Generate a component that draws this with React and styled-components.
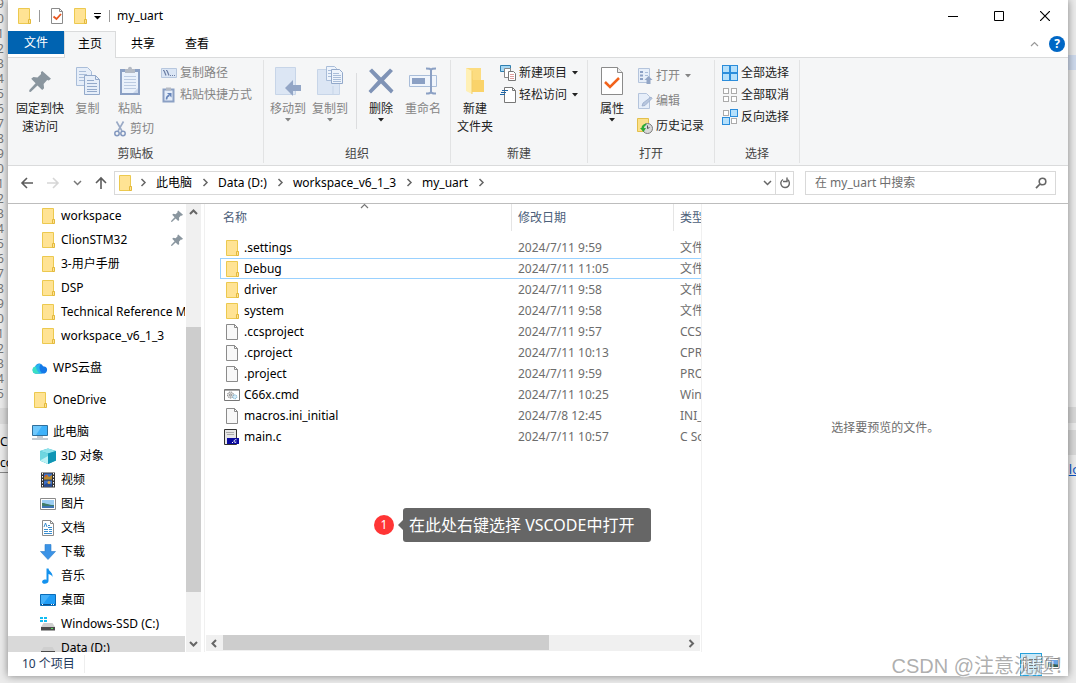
import React from 'react';
import styled, { createGlobalStyle } from 'styled-components';

const GlobalStyle = createGlobalStyle`
  * {
    box-sizing: border-box;
  }
  body {
    margin: 0;
    font: 12px/18px 'Noto Sans', 'Noto Sans CJK SC', sans-serif;
    color: #000;
  }
  button {
    font: inherit;
    color: inherit;
    background: none;
    border: 0;
    padding: 0;
    margin: 0;
  }
  svg {
    display: block;
    flex: none;
  }
`;

/* ---------- icons ---------- */

const FolderIcon = () => (
  <svg width="16" height="16" viewBox="0 0 16 16">
    <path d="M2.500.5h11v10.500h.5v4.500H2.500z" fill="#ffe394" stroke="#ecc94f" />
    <path d="M12.500 11.500h2v4h-2z" fill="#ffe394" stroke="#e3b93c" />
  </svg>
);

const FileIcon = () => (
  <svg width="16" height="16" viewBox="0 0 16 16">
    <path d="M2.500.5h8l3 3v12h-11z" fill="#f8f8f8" stroke="#8b8b8b" />
    <path d="M10.500.5v3h3z" fill="#fff" stroke="#8b8b8b" />
  </svg>
);

const CmdIcon = () => (
  <svg width="16" height="16" viewBox="0 0 16 16">
    <path d="M.5 2.500h15v11H.5z" fill="#fff" stroke="#777" />
    <path d="M1 3h14v1H1z" fill="#aaa" />
    <circle cx="6.500" cy="8" r="3" fill="#ddd" stroke="#777" strokeDasharray="1.200 .8" />
    <circle cx="6.500" cy="8" r="1" fill="#fff" stroke="#888" />
    <circle cx="10.800" cy="9.800" r="2" fill="#d7ecf7" stroke="#66a9cc" strokeDasharray="1 .6" />
  </svg>
);

const CSourceIcon = () => (
  <svg width="16" height="16" viewBox="0 0 16 16">
    <path d="M.5.5h12v15H.5z" fill="#e6e6e6" stroke="#333" />
    <path d="M2 3.500h8M3 5.500h7" stroke="#aaa" />
    <path d="M3 9h12v6H3z" fill="#0a0aa0" />
    <path d="M12.500 10.800c-2-.8-3.500 2-1.500 2.600l1.300-.4M8 13.500h1" fill="none" stroke="#fff" />
  </svg>
);

const PinIcon = ({ size = 12 }) => (
  <svg width={size} height={size} viewBox="0 0 20 20">
    <path
      d="M12 1l8 7-2 1.500-1.500-.3-3.200 3.600.4 3.700-1.700 1.700-4.300-4L1.500 20 0 19.500.5 18l5.500-6-4-4 2-1.700 3.700.6L11 3.700 10.800 2z"
      fill="#8a969f"
    />
  </svg>
);

const CloudIcon = () => (
  <svg width="16" height="16" viewBox="0 0 16 16">
    <path d="M4 13.500a3.500 3.500 0 0 1-.8-6.800C3.800 3.500 9 1.500 11 6.200c3.500 0 5 2.800 3.700 5.300-.8 1.500-1.700 2-3.200 2z" fill="#1479e8" />
    <path d="M4 13.500a3.500 3.500 0 0 1-.8-6.800C4 4.500 6.800 3.300 9 4.200 6 6 8 12 10.500 13.500z" fill="#28b4ee" />
    <path d="M4 13.500a3.500 3.500 0 0 1 0-7c0 3 2 6 4.500 7z" fill="#3be0c4" />
  </svg>
);

const PcIcon = () => (
  <svg width="16" height="16" viewBox="0 0 16 16">
    <path d="M.5 1.500h15v10H.5z" fill="#3fb2fa" stroke="#2f6f9c" />
    <path d="M1 2h9l-6 9H1z" fill="#6fc8fc" />
    <path d="M5 13h6M0 15h16" stroke="#8797a5" />
  </svg>
);

const CubeIcon = () => (
  <svg width="16" height="16" viewBox="0 0 16 16">
    <path d="M0 3l8-2.500L16 3v9.500L8 16l-8-3.500z" fill="#35b6c9" />
    <path d="M0 3l8-2.500L16 3 8 5.500z" fill="#8fe3ec" />
    <path d="M0 3l8 2.500V16l-8-3.500z" fill="#6fd6e0" />
    <path d="M0 12.500L8 8v8z" fill="#bdf2f5" />
    <path d="M8 5.500L16 3v9.500L8 16z" fill="#0f95b4" />
  </svg>
);

const VideoIcon = () => (
  <svg width="16" height="16" viewBox="0 0 16 16">
    <path d="M1 .5h14v15H1z" fill="#333" />
    <path d="M2.500 1v14M13.500 1v14" stroke="#fff" strokeDasharray="1.500 1.500" />
    <path d="M4 1.500h8v6H4zM4 8.500h8v6H4z" fill="#3d6fc4" />
    <path d="M4 5l3-2.500 2 2.500 3-2v4.500H4z" fill="#b98a2e" />
    <path d="M4 13l3-2 5 1.500v2H4z" fill="#284a8e" />
    <circle cx="9" cy="10.500" r="1.500" fill="#e4a63a" />
    <circle cx="6" cy="4" r="1" fill="#d6562f" />
  </svg>
);

const PictureIcon = () => (
  <svg width="16" height="16" viewBox="0 0 16 16">
    <path d="M.5 2.500h15v11H.5z" fill="#fff" stroke="#8a8a8a" />
    <path d="M2 4h12v8H2z" fill="#9ccdf2" />
    <path d="M2 7c4 0 6 2 12 2v1H2z" fill="#3f7c6a" />
    <path d="M2 10h12v2H2z" fill="#3c74b4" />
  </svg>
);

const DocIcon = () => (
  <svg width="16" height="16" viewBox="0 0 16 16">
    <path d="M2.500.5h8l3 3v12h-11z" fill="#fff" stroke="#8b8b8b" />
    <path d="M10.500.5v3h3" fill="none" stroke="#8b8b8b" />
    <path d="M4 7l1.500-4L7 7M8 5.500h2M8 7.500h4M4 9.500h4M9 9.500h3M4 11.500h4M9 11.500h3M4 13.500h8" fill="none" stroke="#3a8ecf" />
  </svg>
);

const DownloadIcon = () => (
  <svg width="16" height="16" viewBox="0 0 16 16">
    <path d="M5 .5h6v7h4.500L8 15.500.5 7.500H5z" fill="#3b93e6" stroke="#2a7ccb" strokeWidth=".6" />
  </svg>
);

const MusicIcon = () => (
  <svg width="16" height="16" viewBox="0 0 16 16">
    <path d="M6.500.5h2c.3 3 4.500 3.500 4 8.500-.8-2-2-2.500-4-3v7c0 2-2.500 3-4.500 2.700-2.500-.4-2.500-3.300 0-4 1-.3 1.700-.2 2.500.1z" fill="#1492ee" />
  </svg>
);

const DesktopIcon = () => (
  <svg width="16" height="16" viewBox="0 0 16 16">
    <path d="M.5 2.500h15v11H.5z" fill="#1f9cf5" stroke="#0a6cb8" />
    <path d="M1 3h9L3 12H1z" fill="#45b1fa" />
    <path d="M1 12.500h14" stroke="#0b4f8c" />
    <path d="M2 12.500h1M11 12.500h1M13 12.500h1" stroke="#fff" />
  </svg>
);

const DriveIcon = ({ system }) => (
  <svg width="16" height="16" viewBox="0 0 16 16">
    {system && <path d="M0 1h3v2H0zM4 1h3v2H4zM0 4h3v2H0zM4 4h3v2H4z" fill="#12bdf2" />}
    <path d="M3.500 7h9l2.500 4H1z" fill="#cfcfcf" />
    <path d="M1 11h14v3.500H1z" fill="#4b4b4b" />
    <path d="M11 12.500h2" stroke="#5be05b" />
  </svg>
);

const CheckDocIcon = () => (
  <svg width="16" height="16" viewBox="0 0 16 16">
    <path d="M2.500.5h8l3 3v12h-11z" fill="#fff" stroke="#8b8b8b" />
    <path d="M10.500.5v3h3" fill="none" stroke="#8b8b8b" />
    <path d="M4.500 8.500l3 2.500 4.500-5" fill="none" stroke="#e8561f" strokeWidth="1.800" />
  </svg>
);

const MenuArrow = () => (
  <svg width="7" height="9" viewBox="0 0 7 9">
    <path d="M0 2.500h7" stroke="#000" />
    <path d="M0 5h7L3.500 8.500z" fill="#000" />
  </svg>
);

const Caret = () => (
  <svg width="6" height="4" viewBox="0 0 6 4">
    <path d="M0 0h6L3 3.500z" fill="currentColor" />
  </svg>
);

const chevrons = {
  right: 'M2.500 1l3.500 3.500L2.500 8',
  left: 'M6 1L2.500 4.500 6 8',
  down: 'M1 3l3.500 3.500L8 3',
  up: 'M1 6l3.500-3.500L8 6',
};

const Chevron = ({ dir, color = '#666', weight = 1.5 }) => (
  <svg width="9" height="9" viewBox="0 0 9 9">
    <path d={chevrons[dir]} fill="none" stroke={color} strokeWidth={weight} />
  </svg>
);

const arrows = {
  back: 'M13 7H2M7 2L2 7l5 5',
  forward: 'M1 7h11M7 2l5 5-5 5',
  up: 'M7 13V2M2 7l5-5 5 5',
};

const Arrow = ({ dir, color }) => (
  <svg width="14" height="14" viewBox="0 0 14 14">
    <path d={arrows[dir]} fill="none" stroke={color} strokeWidth="1.600" />
  </svg>
);

const CopyIcon = () => (
  <svg width="26" height="30" viewBox="0 0 26 30">
    <path d="M1.500 1.500h11l4 4v14h-15z" fill="#e6eef9" stroke="#a9bdd9" />
    <path d="M4 5.500h7M4 8.500h8M4 11.500h8M4 14.500h5" stroke="#a9bdd9" />
    <path d="M9.500 9.500h11l4 4v15h-15z" fill="#e6eef9" stroke="#93a9ca" />
    <path d="M20.500 9.500v4h4M12 14.500h7M12 17.500h10M12 20.500h10M12 23.500h10M12 25.500h10" fill="none" stroke="#93a9ca" />
  </svg>
);

const PasteIcon = () => (
  <svg width="20" height="30" viewBox="0 0 20 30">
    <path d="M0 3h20v26H0z" fill="#8ba0c4" />
    <path d="M2 6h16v21H2z" fill="#eaf1fb" />
    <path d="M4 10.500h12M4 13.500h12M4 16.500h12M4 19.500h12M4 22.500h12" stroke="#bccbe2" />
    <path d="M5 3h3c0-3 4-3 4 0h3v4H5z" fill="#b4bac4" />
    <path d="M13 27h5v-5z" fill="#cbd8ec" />
  </svg>
);

const CutIcon = () => (
  <svg width="12" height="16" viewBox="0 0 12 16">
    <path d="M2.500.5L8 10M9.500.5L4 10" fill="none" stroke="#9aaac6" strokeWidth="1.600" />
    <circle cx="3" cy="12.500" r="2.200" fill="none" stroke="#8398bf" strokeWidth="1.500" />
    <circle cx="9" cy="12.500" r="2.200" fill="none" stroke="#8398bf" strokeWidth="1.500" />
  </svg>
);

const PathIcon = () => (
  <svg width="16" height="16" viewBox="0 0 16 16">
    <path d="M.5 3.500h15v9H.5z" fill="#dbe6f5" stroke="#b7c7de" />
    <path d="M3 5.500l2 5M6 5.500l2 5" stroke="#6d7fa5" strokeWidth="1.200" />
    <path d="M2 5.500h1M5 5.500h1M9 10.500h1M11 10.500h1M13 10.500h1" stroke="#6d7fa5" />
  </svg>
);

const PasteLinkIcon = () => (
  <svg width="16" height="16" viewBox="0 0 16 16">
    <path d="M2.500 2.500h10v12h-10z" fill="#e4edf9" stroke="#8ba0c4" strokeWidth="2" />
    <path d="M5 .5h5v3H5z" fill="#b4bac4" />
    <path d="M5.500 12.500c0-2 .6-3.500 2.800-4" fill="none" stroke="#6583b9" strokeWidth="1.600" />
    <path d="M6 6h4.500v4.500z" fill="#6583b9" />
  </svg>
);

const MoveToIcon = () => (
  <svg width="28" height="30" viewBox="0 0 28 30">
    <path d="M1.500 1.500h20v27h-20z" fill="#dce6f4" stroke="#c7d5e8" />
    <path d="M17 20l0 8" stroke="#c7d5e8" />
    <path d="M11 22l8-8v5h8v6h-8v5z" fill="#93a6c6" />
  </svg>
);

const CopyToIcon = () => (
  <svg width="28" height="30" viewBox="0 0 28 30">
    <path d="M1.500 3.500h22v25h-22z" fill="#dce6f4" stroke="#c7d5e8" />
    <path d="M17 20v8" stroke="#c7d5e8" />
    <path d="M10.500.5h8l2 2v12h-10z" fill="#eef4fc" stroke="#a9bdd9" />
    <path d="M15.500 3.500h8l3 3v11h-11z" fill="#eef4fc" stroke="#93a9ca" />
    <path d="M12 4.500h3M12 7.500h3M12 10.500h3M17 7.500h6M17 9.500h8M17 11.500h8M17 13.500h8M17 15.500h8" stroke="#a9bdd9" />
  </svg>
);

const DeleteIcon = () => (
  <svg width="26" height="26" viewBox="0 0 26 26">
    <path d="M1 3l3-2.500 9 9 9-9L25 3l-9 9.500 9.500 10L23 25.500l-10-10-10 10L.5 23 10 12.500z" fill="#7f93b6" />
  </svg>
);

const RenameIcon = () => (
  <svg width="28" height="28" viewBox="0 0 28 28">
    <path d="M.5 8.500h27v11H.5z" fill="#f0f5fc" stroke="#a9bdd9" />
    <path d="M3 11h13v6H3z" fill="#8ba0c4" />
    <path d="M17 1.500c3 0 5 0 5 2v21c0 2-2 2-5 2M27 1.500c-3 0-5 0-5 2v21c0 2 2 2 5 2" fill="none" stroke="#8ba0c4" strokeWidth="2" />
  </svg>
);

const NewFolderIcon = () => (
  <svg width="20" height="28" viewBox="0 0 20 28">
    <path d="M1 1h15v12h3v12H7z" fill="#fad36a" />
    <path d="M1 1h15v12H8z" fill="#fcdc80" />
    <path d="M1 1l6 3v23l-6-3z" fill="#fff0b5" />
    <path d="M7 4v23" stroke="#f3cf68" />
  </svg>
);

const NewItemIcon = () => (
  <svg width="16" height="16" viewBox="0 0 16 16">
    <path d="M.5.5h10v6H.5z" fill="#a6d8f4" stroke="#2f7fb0" />
    <path d="M4.500 3.500h6v9h-6z" fill="#fff" stroke="#888" />
    <path d="M8.500 6.500h5l2 2v7h-7z" fill="#fff" stroke="#777" />
    <path d="M10 9.500h4M10 11.500h4M10 13.500h4" stroke="#df9d9d" />
  </svg>
);

const EasyAccessIcon = () => (
  <svg width="16" height="16" viewBox="0 0 16 16">
    <path d="M4.500.5h8l3 3v12h-11z" fill="#fff" stroke="#777" />
    <path d="M12.500.5v3h3" fill="none" stroke="#777" />
    <path d="M2 3.500h6M1 5.500h5M0 7.500h5" stroke="#1f67a8" />
  </svg>
);

const PropertiesIcon = () => (
  <svg width="22" height="30" viewBox="0 0 22 30">
    <path d="M.5 1.500h16l5 5v22H.5z" fill="#fff" stroke="#8b8b8b" />
    <path d="M16.500 1.500v5h5" fill="#eee" stroke="#8b8b8b" />
    <path d="M4 16l5 5 9-9" fill="none" stroke="#f2631c" strokeWidth="2.500" />
  </svg>
);

const OpenIcon = () => (
  <svg width="16" height="16" viewBox="0 0 16 16">
    <path d="M1.500.5h11v14h-11z" fill="#e6eef9" stroke="#b4c4dc" />
    <path d="M3 3h3v2H3zM3 6.500h3v2H3zM3 10h3v2H3z" fill="#8ba0c4" />
    <path d="M8 4.500h3M8 7.500h3" stroke="#a9bdd9" />
    <path d="M11.500 8l4 4h-2v4h-4v-4h-2z" fill="#93a6c6" />
  </svg>
);

const EditIcon = () => (
  <svg width="16" height="16" viewBox="0 0 16 16">
    <path d="M1.500.5h8l3 3v12h-11z" fill="#e6eef9" stroke="#b4c4dc" />
    <path d="M5 13l1-3 8-6 1 1.500-7 7z" fill="#b7c6de" stroke="#93a6c6" strokeWidth=".7" />
  </svg>
);

const HistoryIcon = () => (
  <svg width="16" height="16" viewBox="0 0 16 16">
    <path d="M.5.5h11v13H.5z" fill="#fbe08a" stroke="#e3bf4b" />
    <circle cx="10.500" cy="10.500" r="5" fill="#d9d9d9" stroke="#7c7c7c" />
    <path d="M10.500 7.500v3l2-1" fill="none" stroke="#555" />
    <path d="M9 5.500c-3 .5-4.500 2.500-4.500 4.500H3l3.500 4L9 10H7c0-1.500 1-2.500 2.500-3z" fill="#2eab37" />
  </svg>
);

const selectTiles = [
  [0, 0],
  [8, 0],
  [0, 8],
  [8, 8],
];

const SelectIcon = ({ on }) => (
  <svg width="16" height="16" viewBox="0 0 16 16">
    {selectTiles.map(([x, y], i) => {
      const filled = on.includes(i);
      return (
        <rect
          key={i}
          x={filled ? x + 0.5 : x + 1.5}
          y={filled ? y + 0.5 : y + 1.5}
          width={filled ? 7 : 5}
          height={filled ? 7 : 5}
          fill={filled ? '#b5e0fb' : '#fff'}
          stroke={filled ? '#2b8ddb' : '#ababab'}
        />
      );
    })}
  </svg>
);

const SearchIcon = () => (
  <svg width="12" height="12" viewBox="0 0 12 12">
    <circle cx="7.500" cy="4.500" r="3.300" fill="none" stroke="#666" strokeWidth="1.600" />
    <path d="M5 7L1 11.200" stroke="#666" strokeWidth="1.800" />
  </svg>
);

const RefreshIcon = () => (
  <svg width="12" height="12" viewBox="0 0 12 12">
    <path d="M8.500 2.700A4.300 4.300 0 1 1 4 2.500" fill="none" stroke="#666" strokeWidth="1.400" />
    <path d="M8 .5v4h-4" fill="none" stroke="#666" strokeWidth="1.400" />
  </svg>
);

const DetailsIcon = () => (
  <svg width="16" height="14" viewBox="0 0 16 14">
    <path d="M.5.5h4v13h-4z" fill="#fff" stroke="#888" />
    <path d="M2 3.500h1M2 6.500h1" stroke="#888" />
    <path d="M2 10.500h1" stroke="#d33" />
    <path d="M6 2.500h4M11 2.500h4M6 5.500h4M11 5.500h4M6 8.500h4M11 8.500h4M6 11.500h4M11 11.500h4" stroke="#777" />
  </svg>
);

const ThumbnailIcon = () => (
  <svg width="14" height="12" viewBox="0 0 14 12">
    <path d="M.5.5h13v10H.5z" fill="#fff" stroke="#888" />
    <path d="M2 2h10v7H2z" fill="#6aa5e8" />
    <path d="M2 5c3 0 5 1.500 10 1.500V9H2z" fill="#2d5f5c" />
  </svg>
);

/* ---------- desktop behind the window ---------- */

const Desktop = styled.div`
  position: relative;
  display: flex;
  height: 100vh;
  padding: 0 8px 7px;
  overflow: hidden;
  background: #ebebeb;
`;

const LineNumbers = styled.ol`
  position: absolute;
  top: -4px;
  left: -3px;
  margin: 0;
  padding: 0;
  list-style: none;
  color: #777;
  font: 12px/15px 'Noto Sans', sans-serif;
`;

const BackPanel = styled.div`
  position: absolute;
  top: ${(props) => props.$top}px;
  ${(props) => props.$side}: 0;
  width: 8px;
  height: ${(props) => props.$height}px;
  background: ${(props) => props.$color};
`;

const BackText = styled.span`
  position: absolute;
  top: ${(props) => props.$top}px;
  left: 0;
`;

const BackLink = styled.a`
  position: absolute;
  top: 460px;
  right: -12px;
  color: #0b55c4;
  font-size: 13px;
`;

/* ---------- window frame ---------- */

const Window = styled.main`
  position: relative;
  display: flex;
  flex: 1;
  flex-direction: column;
  min-width: 0;
  background: #fff;
  box-shadow: 0 0 8px rgba(0, 0, 0, 0.45);
`;

const TitleBar = styled.header`
  display: flex;
  align-items: center;
  height: 31px;
  padding-left: 8px;
`;

const QuickButton = styled.button`
  display: flex;
  align-items: center;
  justify-content: center;
  width: ${(props) => props.$width || 22}px;
  height: 22px;
`;

const TitleSeparator = styled.span`
  width: 1px;
  height: 12px;
  margin: 0 7px;
  background: #999;
`;

const Title = styled.h1`
  flex: 1;
  margin: 0;
  font-size: 12px;
  font-weight: 400;
`;

const FrameButton = styled.button`
  display: flex;
  align-items: center;
  justify-content: center;
  width: 46px;
  height: 30px;
`;

const TabBar = styled.nav`
  display: flex;
  height: 27px;
  border-bottom: 1px solid #dadbdc;
`;

const Tab = styled.button`
  width: 54px;
  height: 26px;
`;

const FileTab = styled(Tab)`
  width: 56px;
  height: 23px;
  color: #fff;
  background: #0063b1;
`;

const ActiveTab = styled(Tab)`
  width: 52px;
  height: 27px;
  padding-bottom: 2px;
  border: 1px solid #dadbdc;
  border-bottom: 0;
  background: #f5f6f7;
`;

const TabTools = styled.div`
  display: flex;
  align-items: center;
  gap: 10px;
  margin-left: auto;
  padding-right: 3px;
`;

const HelpButton = styled.button`
  width: 16px;
  height: 16px;
  border-radius: 50%;
  color: #fff;
  font-weight: 700;
  line-height: 16px;
  background: #0067c5;
`;

/* ---------- ribbon ---------- */

const Ribbon = styled.section`
  display: flex;
  height: 108px;
  padding: 2px 0;
  border-bottom: 1px solid #dadbdc;
  background: #f5f6f7;
`;

const Group = styled.section`
  display: flex;
  flex-direction: column;
  width: ${(props) => props.$width}px;
  padding: 0 3px;
  border-right: 1px solid #e2e3e4;
`;

const GroupBody = styled.div`
  display: flex;
  flex: 1;
`;

const GroupLabel = styled.h2`
  height: 18px;
  margin: 0;
  color: #444;
  font-size: 12px;
  font-weight: 400;
  text-align: center;
`;

const BigButton = styled.button`
  display: flex;
  flex: none;
  flex-direction: column;
  align-items: center;
  align-self: flex-start;
  width: ${(props) => props.$width}px;
  padding-top: 5px;
  color: #222;

  &:disabled {
    color: #858585;
  }
`;

const BigIcon = styled.span`
  display: flex;
  align-items: center;
  justify-content: center;
  height: 32px;
  margin-bottom: 3px;
`;

const Stack = styled.div`
  display: flex;
  flex-direction: column;
  padding: ${(props) => props.$top ?? 2}px 0 0 ${(props) => props.$left || 0}px;
`;

const SmallButton = styled.button`
  display: flex;
  align-items: center;
  gap: 3px;
  height: ${(props) => props.$height || 22}px;
  color: #222;
  white-space: nowrap;

  svg:last-child:not(:first-child) {
    margin-left: 2px;
  }

  &:disabled {
    color: #858585;
  }
`;

const CutButton = styled(SmallButton)`
  margin-left: 8px;
  gap: 4px;
`;

const InnerDivider = styled.span`
  width: 1px;
  height: 56px;
  margin: 13px 2px 0 5px;
  background: #dcdddf;
`;

/* ---------- address row ---------- */

const AddressRow = styled.div`
  display: flex;
  align-items: center;
  height: 38px;
  padding: 0 12px 4px 11px;
  border-bottom: 1px solid #bdbdbd;
`;

const HistoryButtons = styled.div`
  display: flex;
  align-items: center;
  justify-content: space-between;
  width: 95px;
  padding-right: 6px;
  padding-left: 1px;
`;

const AddressBox = styled.div`
  display: flex;
  flex: 1;
  align-items: center;
  height: 24px;
  padding-left: 2px;
  border: 1px solid #d9d9d9;
`;

const Crumbs = styled.ol`
  display: flex;
  flex: 1;
  margin: 0;
  padding: 0 0 0 6px;
  list-style: none;
`;

const Crumb = styled.li`
  display: flex;
  align-items: center;
  gap: 9px;
  margin-right: 8px;
`;

const RefreshButton = styled.button`
  display: flex;
  align-items: center;
  justify-content: center;
  width: 18px;
  height: 22px;
  margin-left: 3px;
  border-left: 1px solid #d9d9d9;
`;

const SearchBox = styled.label`
  display: flex;
  align-items: center;
  width: 251px;
  height: 24px;
  margin-left: 11px;
  padding: 0 8px 0 9px;
  border: 1px solid #d9d9d9;
`;

const SearchInput = styled.input`
  flex: 1;
  min-width: 0;
  padding: 0;
  border: 0;
  outline: 0;
  font: inherit;

  &::placeholder {
    color: #6d6d6d;
    opacity: 1;
  }
`;

/* ---------- panes ---------- */

const Panes = styled.div`
  display: flex;
  flex: 1;
  min-height: 0;
`;

const TreePane = styled.nav`
  display: flex;
  width: 197px;
  border-right: 1px solid #f0f0f0;
`;

const Tree = styled.ul`
  flex: 1;
  min-width: 0;
  margin: 0 1px 0 0;
  padding: 0;
  overflow: hidden;
  list-style: none;
`;

const TreeItem = styled.li`
  display: flex;
  align-items: center;
  gap: 5px;
  height: 24px;
  margin-top: ${(props) => (props.$root ? 8 : 0)}px;
  padding-left: ${(props) => (props.$root ? 24 : 32)}px;
  background: ${(props) => (props.$selected ? '#d9d9d9' : 'transparent')};
  white-space: nowrap;

  svg:last-child {
    margin-right: 2px;
    margin-left: auto;
  }
`;

const VerticalBar = styled.div`
  display: flex;
  flex-direction: column;
  align-items: center;
  width: 15px;
  margin-right: 3px;
  padding: 4px 0;
  background: #f0f0f0;
`;

const VerticalThumb = styled.div`
  width: 15px;
  height: 265px;
  margin-top: 110px;
  margin-bottom: auto;
  background: #cdcdcd;
`;

const FilePane = styled.section`
  position: relative;
  display: flex;
  flex: 497 1 0;
  flex-direction: column;
  min-width: 0;
  border-right: 1px solid #f0f0f0;
`;

const FileScroll = styled.div`
  flex: 1;
  overflow: hidden;
  padding-left: 15px;
`;

const FileTable = styled.table`
  width: 613px;
  border-spacing: 0;
  table-layout: fixed;
`;

const HeadCell = styled.th`
  width: ${(props) => props.$width}px;
  height: 27px;
  padding: 0 0 0 ${(props) => (props.$first ? 3 : 6)}px;
  border-right: 1px solid #e5e5e5;
  color: #4c607a;
  font-weight: 400;
  text-align: left;
`;

const SortMark = styled.span`
  position: absolute;
  top: -2px;
  left: 155px;
`;

const HeadGap = styled.tr`
  height: 6px;
`;

const FileRow = styled.tr`
  height: 21px;
  outline: ${(props) => (props.$focused ? '1px solid #99d1ff' : 'none')};
  outline-offset: -1px;
`;

const Cell = styled.td`
  height: 21px;
  padding: 0 0 0 6px;
  color: #6d6d6d;
  white-space: nowrap;
`;

const NameCell = styled(Cell)`
  padding-left: 4px;
  color: #000;
`;

const FileName = styled.span`
  display: flex;
  align-items: center;
  gap: 4px;
`;

const HorizontalBar = styled.div`
  display: flex;
  align-items: center;
  justify-content: space-between;
  height: 16px;
  margin: 0 1px 1px;
  padding: 0 4px;
  background: #f0f0f0;
`;

const HorizontalThumb = styled.div`
  width: 67%;
  height: 15px;
  margin-right: auto;
  margin-left: 4px;
  align-self: flex-start;
  background: #cdcdcd;
`;

const PreviewPane = styled.aside`
  display: flex;
  flex: 366 1 0;
  align-items: center;
  justify-content: center;
  color: #6d6d6d;
`;

const StatusBar = styled.footer`
  display: flex;
  align-items: center;
  height: 24px;
  padding: 0 7px 0 14px;
  color: #1e395b;
`;

const StatusText = styled.span`
  padding-right: 9px;
  border-right: 1px solid #eee;
`;

const ViewSwitch = styled.div`
  display: flex;
  gap: 3px;
  margin-left: auto;
`;

const ViewButton = styled.button`
  display: flex;
  align-items: center;
  justify-content: center;
  width: ${(props) => (props.$active ? 22 : 16)}px;
  height: 23px;
  border: ${(props) => (props.$active ? '1px solid #26a0da' : '0')};
  background: ${(props) => (props.$active ? '#cbe8f6' : 'none')};
`;

/* ---------- notes over the window ---------- */

const Callout = styled.div`
  position: absolute;
  top: 304px;
  left: 169px;
  display: flex;
  align-items: center;
  gap: 9px;
  white-space: nowrap;
`;

const Badge = styled.span`
  width: 20px;
  height: 20px;
  border-radius: 50%;
  color: #fff;
  line-height: 20px;
  text-align: center;
  background: #ff3535;
`;

const Bubble = styled.span`
  position: relative;
  width: 248px;
  padding: 0 6px;
  border-radius: 3px;
  color: #fff;
  font-size: 16px;
  line-height: 34px;
  background: #666;

  &::before {
    content: '';
    position: absolute;
    top: 12px;
    left: -5px;
    border: 5px solid transparent;
    border-right-color: #666;
    border-left: 0;
  }
`;

const Watermark = styled.span`
  position: absolute;
  right: -6px;
  bottom: -3px;
  color: rgba(140, 140, 140, 0.7);
  font-family: 'Liberation Sans', 'Noto Sans CJK SC', sans-serif;
  font-size: 20px;
  line-height: 26px;
  text-shadow: 1px 1px 0 rgba(255, 255, 255, 0.8);
  pointer-events: none;
`;

/* ---------- data ---------- */

const lineNumbers = Array.from({ length: 27 }, (_, i) => (i + 9) % 10);

const treeItems = [
  { name: 'workspace', icon: <FolderIcon />, pinned: true },
  { name: 'ClionSTM32', icon: <FolderIcon />, pinned: true },
  { name: '3-用户手册', icon: <FolderIcon /> },
  { name: 'DSP', icon: <FolderIcon /> },
  { name: 'Technical Reference Manual', icon: <FolderIcon /> },
  { name: 'workspace_v6_1_3', icon: <FolderIcon /> },
  { name: 'WPS云盘', icon: <CloudIcon />, root: true },
  { name: 'OneDrive', icon: <FolderIcon />, root: true },
  { name: '此电脑', icon: <PcIcon />, root: true },
  { name: '3D 对象', icon: <CubeIcon /> },
  { name: '视频', icon: <VideoIcon /> },
  { name: '图片', icon: <PictureIcon /> },
  { name: '文档', icon: <DocIcon /> },
  { name: '下载', icon: <DownloadIcon /> },
  { name: '音乐', icon: <MusicIcon /> },
  { name: '桌面', icon: <DesktopIcon /> },
  { name: 'Windows-SSD (C:)', icon: <DriveIcon system /> },
  { name: 'Data (D:)', icon: <DriveIcon />, selected: true },
];

const files = [
  { name: '.settings', date: '2024/7/11 9:59', type: '文件夹', icon: <FolderIcon /> },
  { name: 'Debug', date: '2024/7/11 11:05', type: '文件夹', icon: <FolderIcon />, focused: true },
  { name: 'driver', date: '2024/7/11 9:58', type: '文件夹', icon: <FolderIcon /> },
  { name: 'system', date: '2024/7/11 9:58', type: '文件夹', icon: <FolderIcon /> },
  { name: '.ccsproject', date: '2024/7/11 9:57', type: 'CCSPROJECT 文件', icon: <FileIcon /> },
  { name: '.cproject', date: '2024/7/11 10:13', type: 'CPROJECT 文件', icon: <FileIcon /> },
  { name: '.project', date: '2024/7/11 9:59', type: 'PROJECT 文件', icon: <FileIcon /> },
  { name: 'C66x.cmd', date: '2024/7/11 10:25', type: 'Windows 命令脚本', icon: <CmdIcon /> },
  { name: 'macros.ini_initial', date: '2024/7/8 12:45', type: 'INI_INITIAL 文件', icon: <FileIcon /> },
  { name: 'main.c', date: '2024/7/11 10:57', type: 'C Source File', icon: <CSourceIcon /> },
];

const crumbs = ['此电脑', 'Data (D:)', 'workspace_v6_1_3', 'my_uart'];

/* ---------- parts ---------- */

const RibbonButton = ({ icon, lines, width, disabled, menu }) => (
  <BigButton $width={width} disabled={disabled}>
    <BigIcon>{icon}</BigIcon>
    {lines.map((line) => (
      <span key={line}>{line}</span>
    ))}
    {menu && <Caret />}
  </BigButton>
);

const RibbonGroup = ({ label, width, children }) => (
  <Group $width={width}>
    <GroupBody>{children}</GroupBody>
    <GroupLabel>{label}</GroupLabel>
  </Group>
);

const RibbonBar = () => (
  <Ribbon>
    <RibbonGroup label="剪贴板" width={256}>
      <RibbonButton icon={<PinIcon size={22} />} lines={['固定到快', '速访问']} width={58} />
      <RibbonButton icon={<CopyIcon />} lines={['复制']} width={37} disabled />
      <Stack $top={0}>
        <RibbonButton icon={<PasteIcon />} lines={['粘贴']} width={48} disabled />
        <CutButton disabled>
          <CutIcon />
          剪切
        </CutButton>
      </Stack>
      <Stack $left={7}>
        <SmallButton disabled>
          <PathIcon />
          复制路径
        </SmallButton>
        <SmallButton disabled>
          <PasteLinkIcon />
          粘贴快捷方式
        </SmallButton>
      </Stack>
    </RibbonGroup>
    <RibbonGroup label="组织" width={187}>
      <RibbonButton icon={<MoveToIcon />} lines={['移动到']} width={42} disabled menu />
      <RibbonButton icon={<CopyToIcon />} lines={['复制到']} width={42} disabled menu />
      <InnerDivider />
      <RibbonButton icon={<DeleteIcon />} lines={['删除']} width={44} menu />
      <RibbonButton icon={<RenameIcon />} lines={['重命名']} width={40} disabled />
    </RibbonGroup>
    <RibbonGroup label="新建" width={137}>
      <RibbonButton icon={<NewFolderIcon />} lines={['新建', '文件夹']} width={42} />
      <Stack $left={4}>
        <SmallButton>
          <NewItemIcon />
          新建项目
          <Caret />
        </SmallButton>
        <SmallButton>
          <EasyAccessIcon />
          轻松访问
          <Caret />
        </SmallButton>
      </Stack>
    </RibbonGroup>
    <RibbonGroup label="打开" width={127}>
      <RibbonButton icon={<PropertiesIcon />} lines={['属性']} width={42} menu />
      <Stack $left={4} $top={3}>
        <SmallButton disabled $height={25}>
          <OpenIcon />
          打开
          <Caret />
        </SmallButton>
        <SmallButton disabled $height={25}>
          <EditIcon />
          编辑
        </SmallButton>
        <SmallButton $height={25}>
          <HistoryIcon />
          历史记录
        </SmallButton>
      </Stack>
    </RibbonGroup>
    <RibbonGroup label="选择" width={85}>
      <Stack $left={4}>
        <SmallButton>
          <SelectIcon on={[0, 1, 2, 3]} />
          全部选择
        </SmallButton>
        <SmallButton>
          <SelectIcon on={[]} />
          全部取消
        </SmallButton>
        <SmallButton>
          <SelectIcon on={[1, 2]} />
          反向选择
        </SmallButton>
      </Stack>
    </RibbonGroup>
  </Ribbon>
);

const App = () => {
  return (
    <Desktop>
      <GlobalStyle />
      <LineNumbers>
        {lineNumbers.map((n, i) => (
          <li key={i}>{n}</li>
        ))}
      </LineNumbers>
      <BackPanel $side="left" $top={408} $height={16} $color="#dcdcdc" />
      <BackText $top={433}>C</BackText>
      <BackText $top={454}>co</BackText>
      <BackPanel $side="left" $top={472} $height={1} $color="#888" />
      <BackPanel $side="right" $top={55} $height={15} $color="#cdd9ec" />
      <BackPanel $side="right" $top={407} $height={16} $color="#d8d8d8" />
      <BackPanel $side="right" $top={430} $height={25} $color="#d8d8d8" />
      <BackLink href="#log">log</BackLink>

      <Window>
        <TitleBar>
          <FolderIcon />
          <TitleSeparator />
          <QuickButton aria-label="属性" $width={20}>
            <CheckDocIcon />
          </QuickButton>
          <QuickButton aria-label="新建文件夹" $width={25}>
            <FolderIcon />
          </QuickButton>
          <QuickButton aria-label="自定义快速访问工具栏" $width={10}>
            <MenuArrow />
          </QuickButton>
          <TitleSeparator />
          <Title>my_uart</Title>
          <FrameButton aria-label="最小化">
            <svg width="10" height="10" viewBox="0 0 10 10">
              <path d="M0 5.500h10" stroke="#000" />
            </svg>
          </FrameButton>
          <FrameButton aria-label="最大化">
            <svg width="10" height="10" viewBox="0 0 10 10">
              <path d="M.5.5h9v9h-9z" fill="none" stroke="#000" />
            </svg>
          </FrameButton>
          <FrameButton aria-label="关闭">
            <svg width="10" height="10" viewBox="0 0 10 10">
              <path d="M0 0l10 10M10 0L0 10" stroke="#000" strokeWidth="1.200" />
            </svg>
          </FrameButton>
        </TitleBar>

        <TabBar>
          <FileTab>文件</FileTab>
          <ActiveTab>主页</ActiveTab>
          <Tab>共享</Tab>
          <Tab>查看</Tab>
          <TabTools>
            <Chevron dir="up" color="#999" weight={1.2} />
            <HelpButton>?</HelpButton>
          </TabTools>
        </TabBar>

        <RibbonBar />

        <AddressRow>
          <HistoryButtons>
            <button aria-label="后退">
              <Arrow dir="back" color="#5c5c5c" />
            </button>
            <button aria-label="前进">
              <Arrow dir="forward" color="#d6d6d6" />
            </button>
            <button aria-label="最近浏览的位置">
              <Chevron dir="down" color="#777" />
            </button>
            <button aria-label="上移">
              <Arrow dir="up" color="#5c5c5c" />
            </button>
          </HistoryButtons>
          <AddressBox>
            <FolderIcon />
            <Crumbs>
              <Crumb>
                <Chevron dir="right" />
              </Crumb>
              {crumbs.map((crumb) => (
                <Crumb key={crumb}>
                  {crumb}
                  <Chevron dir="right" />
                </Crumb>
              ))}
            </Crumbs>
            <Chevron dir="down" />
            <RefreshButton aria-label="刷新">
              <RefreshIcon />
            </RefreshButton>
          </AddressBox>
          <SearchBox>
            <SearchInput type="text" aria-label="搜索" placeholder="在 my_uart 中搜索" />
            <SearchIcon />
          </SearchBox>
        </AddressRow>

        <Panes>
          <TreePane>
            <Tree>
              {treeItems.map((item) => (
                <TreeItem key={item.name} $root={item.root} $selected={item.selected}>
                  {item.icon}
                  <span>{item.name}</span>
                  {item.pinned && <PinIcon />}
                </TreeItem>
              ))}
            </Tree>
            <VerticalBar>
              <Chevron dir="up" weight={2} />
              <VerticalThumb />
              <Chevron dir="down" weight={2} />
            </VerticalBar>
          </TreePane>

          <FilePane>
            <SortMark>
              <Chevron dir="up" color="#777" weight={1.2} />
            </SortMark>
            <FileScroll>
              <FileTable>
                <thead>
                  <tr>
                    <HeadCell $width={292} $first>
                      名称
                    </HeadCell>
                    <HeadCell $width={162}>修改日期</HeadCell>
                    <HeadCell $width={159}>类型</HeadCell>
                  </tr>
                </thead>
                <tbody>
                  <HeadGap>
                    <td colSpan="3" />
                  </HeadGap>
                  {files.map((file) => (
                    <FileRow key={file.name} $focused={file.focused}>
                      <NameCell>
                        <FileName>
                          {file.icon}
                          {file.name}
                        </FileName>
                      </NameCell>
                      <Cell>{file.date}</Cell>
                      <Cell>{file.type}</Cell>
                    </FileRow>
                  ))}
                </tbody>
              </FileTable>
            </FileScroll>
            <HorizontalBar>
              <Chevron dir="left" weight={2} />
              <HorizontalThumb />
              <Chevron dir="right" weight={2} />
            </HorizontalBar>
            <Callout>
              <Badge>1</Badge>
              <Bubble>在此处右键选择 VSCODE中打开</Bubble>
            </Callout>
          </FilePane>

          <PreviewPane>选择要预览的文件。</PreviewPane>
        </Panes>

        <StatusBar>
          <StatusText>10 个项目</StatusText>
          <ViewSwitch>
            <ViewButton $active aria-label="详细信息">
              <DetailsIcon />
            </ViewButton>
            <ViewButton aria-label="大缩略图">
              <ThumbnailIcon />
            </ViewButton>
          </ViewSwitch>
        </StatusBar>
        <Watermark>CSDN @注意沈题！</Watermark>
      </Window>
    </Desktop>
  );
};

export default App;
